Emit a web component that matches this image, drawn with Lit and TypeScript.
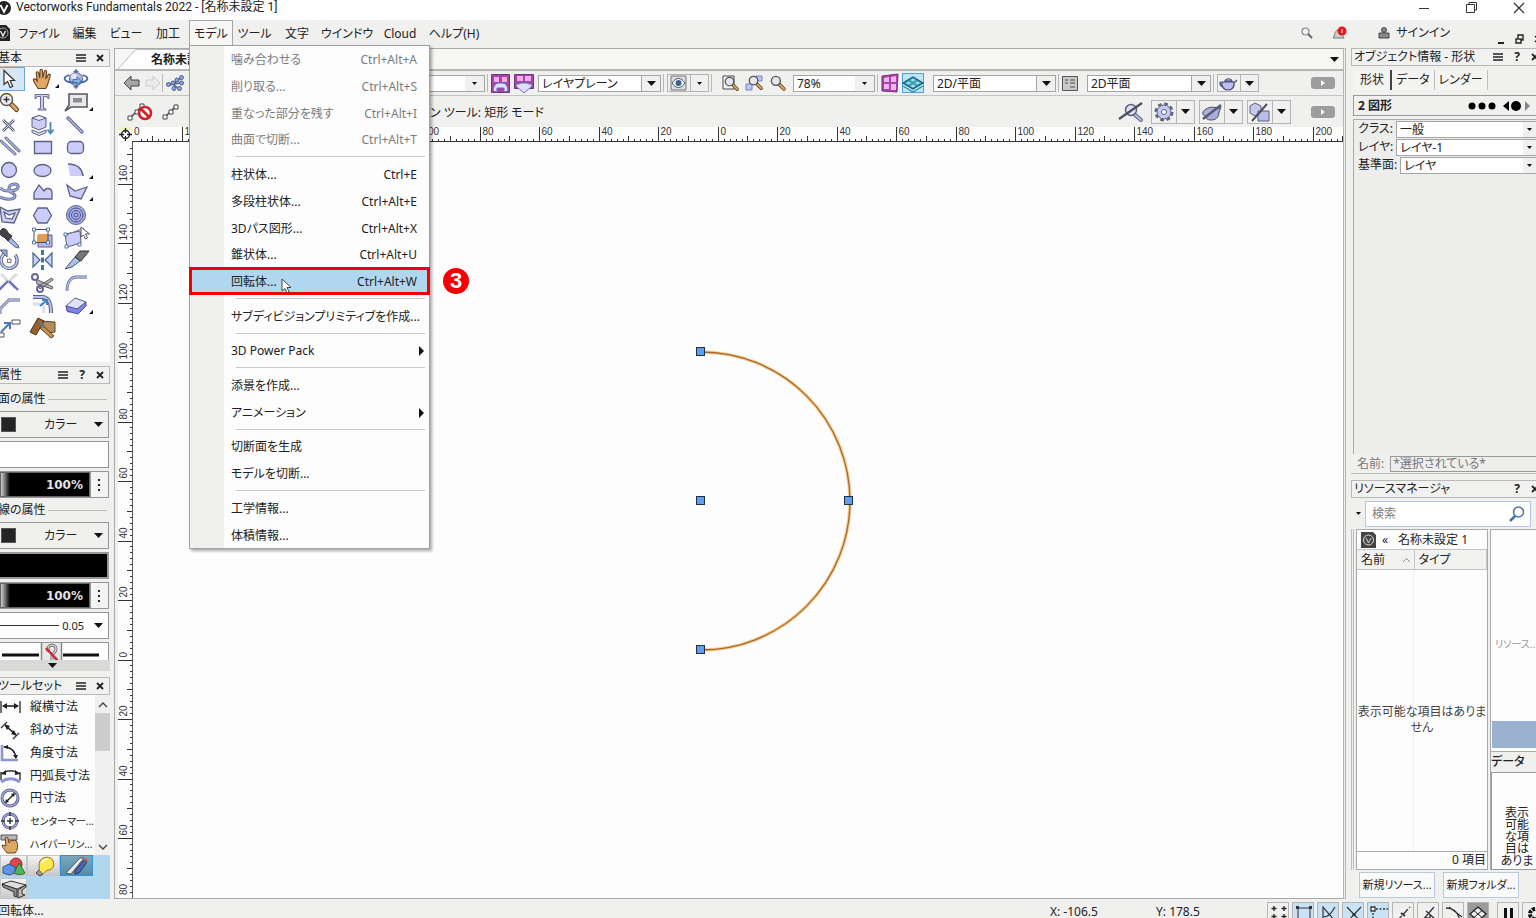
import { LitElement, html, css, svg, nothing } from "lit";
import type { TemplateResult } from "lit";
import { customElement } from "lit/decorators.js";
import { classMap } from "lit/directives/class-map.js";

const OUT = "#59637c";
const LAV = "#ccccfb";
const BLUE = "#6573b4";

/* Draws an icon of w x h units at its natural size. */
const icon = (w: number, h: number, body: unknown) =>
  html`<svg class="icon" width=${w} height=${h} viewBox="0 0 ${w} ${h}" aria-hidden="true">${body}</svg>`;

const caret = icon(9, 5, svg`<path d="M0 0h9L4.5 5z" fill="#111"/>`);
const smallCaret = icon(5, 3, svg`<path d="M0 0h5L2.5 3z" fill="#111"/>`);
const menuGlyph = icon(10, 8, svg`<path d="M0 1h10M0 4h10M0 7h10" stroke="#222" stroke-width="1.5"/>`);
const closeGlyph = icon(8, 8, svg`<path d="M1 1l6 6M7 1l-6 6" stroke="#222" stroke-width="1.8"/>`);

const lens = svg`<path d="M10.500 10.500l5 5" stroke="#5c4426" stroke-width="4" stroke-linecap="round"/><path d="M11 11l4.500 4.500" stroke="#dba663" stroke-width="2.200" stroke-linecap="round"/><circle cx="6.500" cy="6.500" r="5" fill="#e4e6ec" stroke="#555" stroke-width="1.500"/>`;

/* Tool glyphs share a 26 x 22 box. */
const glyphs: Record<string, unknown> = {
  arrow: svg`<path d="M9 2.500v14l3.600-3 2.600 6 2.500-1-2.600-6h4.400z" fill="#fff" stroke="#333" stroke-width="1.200"/>`,
  hand: svg`<path d="M9 20.500C7 16.500 4.500 14 4.300 11.800c.5-1.800 2.400-1 4 1L7.200 5.200c0-2 2-2 2.500 0l1.100 5L11 2.800c.2-2 2.400-2 2.500 0l.3 7.100 1.500-6.300c.6-1.900 2.600-1.300 2.300.5l-.9 7 2.400-4.200c1-1.500 2.700-.6 2.100 1-1.600 4.600-2 9.600-4.600 12.600z" fill="#e3a765" stroke="#5d4325" stroke-width="1.100"/>`,
  flyover: svg`<circle cx="13" cy="11" r="6.500" fill="#b4b5f3" stroke="${OUT}"/><circle cx="11" cy="8.500" r="3" fill="#e6e6ff"/><path d="M6.500 7C-1 9 .5 13 8 14.500l10 0C25.500 13 27 9 19.500 7" fill="none" stroke="#40669f" stroke-width="1.800"/><path d="M10 11.500h4v-2.500l4.500 4-4.500 4v-2.500h-4z" fill="#86b4e2" stroke="#315f98" stroke-width=".8"/><path d="M13 1l-3 3h6zM13 21l-3-3h6z" fill="#58739f"/>`,
  zoom: svg`<g transform="translate(4 1)"><path d="M12 12l5.500 5.500" stroke="#5c4426" stroke-width="5" stroke-linecap="round"/><path d="M12.500 12.500l5 5" stroke="#dba663" stroke-width="3" stroke-linecap="round"/><circle cx="7.500" cy="7.500" r="6" fill="#eceef3" stroke="#555" stroke-width="1.400"/><path d="M7.500 4.500v6M4.500 7.500h6" stroke="#333" stroke-width="1.400"/></g>`,
  text: svg`<path d="M6 3.500h14v4h-1.200l-.8-2h-3.500v12l2.500.5v1H9v-1l2.500-.5v-12H8l-.8 2H6z" fill="${LAV}" stroke="${OUT}" stroke-width=".9"/>`,
  callout: svg`<path d="M6 3h18v13H8l-6 4 4-6z" fill="#e9e9ec" stroke="#55585f" stroke-width="1.600"/><path d="M10 7h9v4.500h-9z" fill="#8c8d92"/>`,
  locus: svg`<path d="M8 6l11 11M19 6L8 17" stroke="${OUT}" stroke-width="2.800"/><path d="M8 6l11 11M19 6L8 17" stroke="#e0e2f0" stroke-width="1"/>`,
  extrude: svg`<path d="M3 4l7-2.500L17 4v9l-7 3-7-3z" fill="${LAV}" stroke="${OUT}"/><path d="M3 4l7 2.500L17 4l-7-2.500z" fill="#ececff" stroke="${OUT}"/><path d="M3 16l7 3 7-3v2.500l-7 3-7-3z" fill="#e5e5fb" stroke="${OUT}"/><path d="M21.500 8v11m-3-3.500l3 4 3-4" fill="none" stroke="#5084bd" stroke-width="1.800"/>`,
  line: svg`<path d="M5 4l14 14" stroke="${OUT}" stroke-width="3.200" stroke-linecap="round"/><path d="M5 4l14 14" stroke="#b1b8f6" stroke-width="1.500" stroke-linecap="round"/>`,
  dline: svg`<path d="M6 5l14 13M11 2l13 13" stroke="${OUT}" stroke-width="3" stroke-linecap="round"/><path d="M6 5l14 13M11 2l13 13" stroke="#aeb6f6" stroke-width="1.400" stroke-linecap="round"/>`,
  rect: svg`<path d="M5.500 5.500h17v12h-17z" fill="${LAV}" stroke="${OUT}" stroke-width="1.300"/>`,
  rrect: svg`<rect x="4.500" y="5.500" width="16" height="12" rx="4" fill="${LAV}" stroke="${OUT}" stroke-width="1.300"/>`,
  circle: svg`<circle cx="14" cy="11" r="7.500" fill="${LAV}" stroke="${OUT}" stroke-width="1.300"/>`,
  oval: svg`<ellipse cx="13.500" cy="11.500" rx="8.500" ry="6" fill="${LAV}" stroke="${OUT}" stroke-width="1.300"/>`,
  arc: svg`<path d="M5 5C13 5 19 9 20 17H7z" fill="${LAV}"/><path d="M5 5C13 5 19 9 20 17" fill="none" stroke="${OUT}" stroke-width="1.600"/>`,
  freehand: svg`<path d="M5 7c2 2 5 3 9 3 6 0 10-2 9-5-1-3-9-3-9 3 0 4 6 4 6 7 0 4-9 4-15 1" fill="none" stroke="${OUT}" stroke-width="3"/><path d="M5 7c2 2 5 3 9 3 6 0 10-2 9-5-1-3-9-3-9 3 0 4 6 4 6 7 0 4-9 4-15 1" fill="none" stroke="#aab3f3" stroke-width="1.300"/>`,
  poly: svg`<path d="M5 18v-6l5-8 5 6c1-3 7-4 8 1v7z" fill="${LAV}" stroke="${OUT}" stroke-width="1.300"/>`,
  polygon: svg`<path d="M4 4l8 6 12-4-6 12-11-3z" fill="${LAV}" stroke="${OUT}" stroke-width="1.300"/>`,
  dpoly: svg`<path d="M5 3l8 4 12-2-6 14-12-1z" fill="${LAV}" stroke="${OUT}" stroke-width="1.300"/><path d="M9 8l5 3 6-2-3 6-6-1z" fill="#fff" stroke="${OUT}" stroke-width="1.200"/>`,
  hexagon: svg`<path d="M9 4h9l4.500 7.500L18 19H9l-4.500-7.500z" fill="${LAV}" stroke="${OUT}" stroke-width="1.300"/>`,
  spiral: svg`<circle cx="13" cy="11" r="9.500" fill="#a9aeee" stroke="${OUT}"/><circle cx="13" cy="11" r="7" fill="none" stroke="#46507f"/><circle cx="13" cy="11" r="4.500" fill="none" stroke="#46507f"/><circle cx="13" cy="11" r="2" fill="none" stroke="#46507f"/>`,
  dropper: svg`<path d="M15 10l8 8 1 3-4-1-8-7z" fill="#a7b4f2" stroke="${OUT}"/><path d="M6 3c2-3 6-1 7 3l4 3-4 5-4-4C5 9 4 6 6 3z" fill="#43434a" stroke="#2c2c30"/>`,
  clip: svg`<path d="M9 8h14v12H9z" fill="#b3b5ee" stroke="${OUT}"/><path d="M9 7h10v8H9z" fill="#e09c52"/><path d="M5 2.500h14v13H5z" fill="none" stroke="#454b59"/><path d="M3.500 1h3v3h-3zM17.500 1h3v3h-3zM3.500 14h3v3h-3zM17.500 14h3v3h-3z" fill="#fff" stroke="#416b9b" stroke-width=".9"/>`,
  reshape: svg`<path d="M2 7l15-3 1 12-14 4z" fill="${LAV}" stroke="${OUT}"/><path d="M3 8L21 1" stroke="#777"/><path d="M1 6h3v3H1zM2 18h3v3H2zM15 16h3v3h-3z" fill="#fff" stroke="#416b9b" stroke-width=".9"/><path d="M18 0v10l2.500-2 2 4 2-1-2-4h4z" fill="#fff" stroke="#555"/>`,
  rotate: svg`<path d="M11 4a8 8 0 1 0 9 2" fill="none" stroke="${OUT}" stroke-width="3.400"/><path d="M11 4a8 8 0 1 0 9 2" fill="none" stroke="#c3cdf7" stroke-width="1.600"/><path d="M5 1h7v7z" fill="#92a6db" stroke="${OUT}"/><path d="M12.500 10h3.500v3.500h-3.500z" fill="none" stroke="#777"/>`,
  mirror: svg`<path d="M4 4l7 7-7 7zM23 4l-7 7 7 7z" fill="${LAV}" stroke="#47668d" stroke-width="1.200"/><path d="M13.500 1v20" stroke="#4475a3" stroke-width="3" stroke-dasharray="5 2.500"/>`,
  knife: svg`<path d="M2 20L12 8l5 4-8 6z" fill="#abc1e9" stroke="#46566f"/><path d="M12 8l5-6h9l-8 10z" fill="#75777c" stroke="#333"/>`,
  trim: svg`<path d="M6 2l14 14M22 2l-7 6" stroke="#ddd" stroke-width="3"/><path d="M14 9l9 9M13 9l-9 9" stroke="${BLUE}" stroke-width="2.400"/>`,
  scissors: svg`<path d="M7 7l17 8-1 2L8 12zM9 14l14-8 1 2-13 9z" fill="#b3b3b7" stroke="#555" stroke-width=".9"/><circle cx="6" cy="5" r="3" fill="none" stroke="#6a659c" stroke-width="2"/><circle cx="11" cy="17" r="3" fill="none" stroke="#6a659c" stroke-width="2"/>`,
  fillet: svg`<path d="M4 19c0-9 4-14 10-14h10" fill="none" stroke="${OUT}" stroke-width="2.800"/><path d="M4 19c0-9 4-14 10-14h10" fill="none" stroke="#b7c3f6" stroke-width="1.400"/>`,
  chamfer: svg`<path d="M5 20v-5l9-9h11" fill="none" stroke="${OUT}" stroke-width="2.800"/><path d="M5 20v-5l9-9h11" fill="none" stroke="#b7c3f6" stroke-width="1.400"/>`,
  offset: svg`<path d="M4 3h9c6 0 9 4 9 16" fill="none" stroke="${OUT}" stroke-width="4"/><path d="M4 3h9c6 0 9 4 9 16" fill="none" stroke="#b7c3f6" stroke-width="2"/><path d="M4 10h6c4 0 5 2 5 9" fill="none" stroke="#dcdcf2" stroke-width="3"/><path d="M11 12l6-5m-4-1h5v5" fill="none" stroke="#3e83b9" stroke-width="2"/>`,
  eraser: svg`<path d="M3 12L12 4l11 4-8 9-10 1z" fill="#dfe0fb" stroke="${OUT}"/><path d="M3 12l11 3 9-7v4l-8 8-11-3z" fill="#7f84e6" stroke="#4a4f95"/>`,
  connect: svg`<path d="M17 3h8v4h-8zM3 16h6v4H3z" fill="#fff" stroke="#555"/><path d="M6 15l8-8m-5-1h6v6" fill="none" stroke="#4e76b0" stroke-width="2"/>`,
  roller: svg`<path d="M12 4l14 1v10l-7 1z" fill="#b38e5c" stroke="#5b4429"/><path d="M1 15L9 1l6 3-8 14z" fill="#965f2c" stroke="#4b3219"/><path d="M11 11l11 10 3-2-11-10z" fill="#d0914b" stroke="#5b4429"/><path d="M11 5l4 6" stroke="#5a7ea7" stroke-width="2"/>`,
};

interface Tool { id: string; label: string; flyout?: boolean; }
const tools: Tool[] = [
  { id: "arrow", label: "セレクション" }, { id: "hand", label: "パン", flyout: true }, { id: "flyover", label: "フライオーバー" },
  { id: "zoom", label: "拡大表示" }, { id: "text", label: "文字" }, { id: "callout", label: "引出線", flyout: true },
  { id: "locus", label: "基準点" }, { id: "extrude", label: "プッシュ/プル" }, { id: "line", label: "直線" },
  { id: "dline", label: "ダブルライン" }, { id: "rect", label: "四角形" }, { id: "rrect", label: "隅の丸い四角形" },
  { id: "circle", label: "円" }, { id: "oval", label: "長円" }, { id: "arc", label: "円弧", flyout: true },
  { id: "freehand", label: "フリーハンド" }, { id: "poly", label: "曲線" }, { id: "polygon", label: "多角形", flyout: true },
  { id: "dpoly", label: "ダブルライン多角形" }, { id: "hexagon", label: "正多角形" }, { id: "spiral", label: "渦巻き" },
  { id: "dropper", label: "アイドロッパ" }, { id: "clip", label: "属性マッピング" }, { id: "reshape", label: "変形" },
  { id: "rotate", label: "回転" }, { id: "mirror", label: "ミラー反転" }, { id: "knife", label: "切断" },
  { id: "trim", label: "トリミング" }, { id: "scissors", label: "はさみ" }, { id: "fillet", label: "フィレット" },
  { id: "chamfer", label: "面取り" }, { id: "offset", label: "オフセット" }, { id: "eraser", label: "消しゴム", flyout: true },
  { id: "connect", label: "結合" }, { id: "roller", label: "属性" },
];

/* Menu bar entries and the column width each one takes. */
const menus: [string, number][] = [
  ["ファイル", 50], ["編集", 41], ["ビュー", 42], ["加工", 42], ["モデル", 44], ["ツール", 43],
  ["文字", 42], ["ウインドウ", 58], ["Cloud", 48], ["ヘルプ(H)", 60],
];

interface Entry { label: string; keys?: string; off?: boolean; sub?: boolean; hot?: boolean; }
const modelMenu: (Entry | null)[] = [
  { label: "噛み合わせる", keys: "Ctrl+Alt+A", off: true },
  { label: "削り取る...", keys: "Ctrl+Alt+S", off: true },
  { label: "重なった部分を残す", keys: "Ctrl+Alt+I", off: true },
  { label: "曲面で切断...", keys: "Ctrl+Alt+T", off: true },
  null,
  { label: "柱状体...", keys: "Ctrl+E" },
  { label: "多段柱状体...", keys: "Ctrl+Alt+E" },
  { label: "3Dパス図形...", keys: "Ctrl+Alt+X" },
  { label: "錐状体...", keys: "Ctrl+Alt+U" },
  { label: "回転体...", keys: "Ctrl+Alt+W", hot: true },
  null,
  { label: "サブディビジョンプリミティブを作成..." },
  null,
  { label: "3D Power Pack", sub: true },
  null,
  { label: "添景を作成..." },
  { label: "アニメーション", sub: true },
  null,
  { label: "切断面を生成" },
  { label: "モデルを切断..." },
  null,
  { label: "工学情報..." },
  { label: "体積情報..." },
];

const toolset: [string, unknown, boolean?][] = [
  ["縦横寸法", svg`<path d="M1 3v12M20 3v12" stroke="#333" stroke-width="1.400"/><path d="M3 8h15" stroke="#222" stroke-width="1.600"/><path d="M2 8l5-3v6zM19 8l-5-3v6z" fill="#222"/>`],
  ["斜め寸法", svg`<path d="M1 7l6-6M13 18l6-6" stroke="#333" stroke-width="1.300"/><path d="M6 5l9 8" stroke="#222" stroke-width="1.600"/><path d="M4 3l6 2-3 4zM17 15l-6-2 3-4z" fill="#222"/>`],
  ["角度寸法", svg`<path d="M2 1v15h16" fill="none" stroke="#8f94d2" stroke-width="2.600"/><path d="M4 3c7 0 11 4 12 11" fill="none" stroke="#222" stroke-width="1.500"/><path d="M3 3l5-2v4zM16 15l-3-4h5z" fill="#222"/>`],
  ["円弧長寸法", svg`<path d="M1 15c6-4 13-4 19 0" fill="none" stroke="#8f94d2" stroke-width="3"/><path d="M1 13V5M20 13V5M1 7c6-4 13-4 19 0" fill="none" stroke="#333" stroke-width="1.400"/><path d="M1 7l5-4v5zM20 7l-5-4v5z" fill="#222"/>`],
  ["円寸法", svg`<circle cx="10" cy="9" r="8" fill="#fff" stroke="#555b80" stroke-width="3"/><circle cx="10" cy="9" r="8" fill="none" stroke="#a3a8df" stroke-width="1.400"/><path d="M6 13l8-8" stroke="#222" stroke-width="1.400"/><path d="M5 14l1-4 3 3zM15 4l-1 4-3-3z" fill="#222"/>`],
  ["センターマー...", svg`<circle cx="10" cy="9" r="7" fill="#fff" stroke="#555b80" stroke-width="3"/><circle cx="10" cy="9" r="7" fill="none" stroke="#a3a8df" stroke-width="1.400"/><path d="M10 0v4M10 14v4M1 9h4M15 9h4M10 6v6M7 9h6" stroke="#333" stroke-width="1.500"/>`, true],
  ["ハイパーリン...", svg`<path d="M1 0h16v5H1z" fill="#b9b9bd" stroke="#555"/><path d="M7 18c-3-4-5-6-5-8l4 1-1-8c1-1 2-1 3 0l1 5 2-3 2 1 2-1 2 2c1 3 1 8-2 11z" fill="#e3a765" stroke="#5d4325"/>`, true],
];

const snaps: [string, string, unknown][] = [
  ["グリッドスナップ", "", svg`<path d="M6 3v5M3.500 5.500h5M16 3v5M13.500 5.500h5M6 11v5M3.500 13.500h5M16 11v5M13.500 13.500h5" stroke="#222" stroke-width="1.300"/>`],
  ["図形スナップ", "on", svg`<path d="M5 5h12v13H5z" fill="none" stroke="#333"/><path d="M3 3h3v3H3zM16 3h3v3h-3z" fill="#333"/>`],
  ["角度スナップ", "on", svg`<path d="M5 19V4l12 14M5 14c6 0 9-5 12-10" fill="none" stroke="#333" stroke-width="1.200"/>`],
  ["交点スナップ", "on", svg`<path d="M4 4l14 15M18 4L4 19" stroke="#333" stroke-width="1.200"/><path d="M9.500 10h3v3h-3z" fill="#333"/>`],
  ["スマートポイント", "on", svg`<path d="M3 4h4v4H3z" fill="#fff" stroke="#333" stroke-width="1.300"/><path d="M8 6h12M5 10v9" stroke="#333" stroke-width="1.300" stroke-dasharray="2 1.500"/>`],
  ["距離スナップ", "", svg`<path d="M4 18L17 4" stroke="#333" stroke-width="1.300" stroke-dasharray="7 2"/><path d="M8 10l4 3" stroke="#333" stroke-width="2"/>`],
  ["スマートエッジ", "", svg`<path d="M4 18L16 4M8 8l9 8M6 15h6v-4" fill="none" stroke="#333" stroke-width="1.300"/>`],
  ["接線スナップ", "", svg`<path d="M3 5c9 0 13 6 14 14M6 4l13 10" fill="none" stroke="#333" stroke-width="1.300"/>`],
  ["作業平面", "dark", svg`<path d="M10 4l8 7-8 7-8-7z" fill="#eee" stroke="#222" stroke-width="1.300"/><path d="M6 7.500l8 7M14 7.500l-8 7" stroke="#222"/>`],
];

const STEP = 59.5;
const ORIGIN_X = 599.7;

@customElement("app-root")
export class AppRoot extends LitElement {
  static styles = css`
    :host {
      display: grid;
      grid-template-rows: 20px 26px minmax(0, 1fr) 17px;
      height: 100vh;
      overflow: hidden;
      background: #f0f0ef;
      color: #222;
      font: 12px/16px "Noto Sans", "Noto Sans CJK JP", sans-serif;
      font-feature-settings: "palt";
      white-space: nowrap;
    }
    * { box-sizing: border-box; }
    button, select, input { font: inherit; font-feature-settings: inherit; color: inherit; margin: 0; padding: 0; border: 0; border-radius: 0; background: none; }
    button { display: flex; align-items: center; justify-content: center; }
    ul { list-style: none; margin: 0; padding: 0; }
    .icon { display: block; flex: none; overflow: visible; }

    .title { display: flex; align-items: center; background: #fefefe; padding: 0 12px 5px 0; }
    .title .icon { margin-left: -4px; }
    .title h1 { margin: 0 0 0 4px; font: 400 12px/15px "Roboto", "Noto Sans CJK JP", sans-serif; flex: 1; }
    .winbtns { display: flex; gap: 37px; }
    .winbtns .icon { margin: 0; }

    .menubar { display: flex; align-items: stretch; }
    .logo { align-self: center; width: 14px; overflow: hidden; }
    .logo .icon { margin-left: -4px; }
    .menus { display: flex; }
    .menus > li { position: relative; display: flex; }
    .menus > li > button { width: 100%; padding-top: 1px; }
    .open { background: #f7f7f6; border: 1px solid #a5a5a5; border-bottom: 0; }
    .account { display: flex; align-items: center; margin-left: auto; }
    .account button { gap: 7px; }
    .search { margin-right: 20px; }
    .bell { margin-right: 31px; }
    .signin { margin-right: 48px; }
    .mdi { display: flex; align-items: flex-end; gap: 10px; padding-bottom: 2px; margin-right: -6px; }

    .drop {
      position: absolute; z-index: 5; left: 0; top: 25px; width: 241px; height: 504px;
      display: flex; flex-direction: column;
      background: linear-gradient(90deg, #f0f0ef 34px, #fdfdfd 34px);
      border: 1px solid #a0a0a0; box-shadow: 2px 2px 3px #0005;
    }
    .drop li { flex: 1; display: flex; min-height: 0; }
    .drop .sep { flex: 0 0 8px; align-items: center; padding: 0 4px 0 46px; }
    .sep hr { width: 100%; margin: 0; border: 0; border-top: 1px solid #c9c9c9; }
    .drop button { width: 100%; justify-content: flex-start; padding: 2px 12px 0 41px; }
    .drop button:disabled { color: #7c7c7c; }
    .drop kbd { font: inherit; margin-left: auto; }
    .drop .sub { margin-left: auto; margin-right: -7px; }
    .drop .hot { background: #b0d6f0; outline: 3px solid #f00000; outline-offset: -2px; }
    .drop .hot button { position: relative; }
    .pointer { position: absolute; left: 91px; top: 10px; }
    .badge {
      position: absolute; z-index: 6; left: 254px; top: 248px; width: 26px; height: 26px; border-radius: 50%;
      background: #f50000; color: #fff; display: grid; place-items: center; font: bold 22px/26px "Liberation Sans", Arial, sans-serif;
    }

    main { display: grid; grid-template-columns: 111px minmax(0, 1fr) 185px; min-height: 0; }

    .left { display: flex; flex-direction: column; min-height: 0; overflow: hidden; padding: 3px 0 2px; }
    .head {
      display: flex; align-items: center; gap: 10px; flex: none; height: 18px; padding-right: 5px;
      border: 1px solid #b9b9b9; border-left: 0; background: #f1f1f0; margin-right: 1px;
    }
    .head h2 { margin: 0 auto 0 -2px; font-size: 12px; font-weight: 400; }
    .head b { font-size: 12px; width: 8px; text-align: center; }
    .toolbox { flex: 1; background: #fdfdfd; margin: 0 1px 4px 0; }
    .tools { display: grid; grid-template-columns: repeat(3, 34px); grid-template-rows: repeat(12, 1fr); height: 272px; margin-left: -9px; }
    .picked { background: #d5e7f5; border: 1px solid #68a7de; }

    .group { flex: none; display: flex; align-items: center; height: 24px; padding-right: 2px; }
    .group span { margin-left: -2px; }
    .group hr { flex: 1; border: 0; border-top: 1px solid #bdbdbd; margin: 0 0 0 2px; }
    .attrs { flex: none; display: flex; flex-direction: column; padding: 3px 2px 0 0; }
    .box { height: 27px; border: 1px solid #969696; border-left: 0; background: #fefefe; margin-bottom: 3px; }
    .color { height: 27px; margin-bottom: 3px; border: 1px solid #969696; border-left: 0; display: grid; grid-template-columns: 1fr auto; align-items: center; }
    .color > * { grid-row: 1; }
    .color .icon { pointer-events: none; }
    .swatch { grid-column: 1; width: 15px; height: 15px; background: #242424; border: 1px solid #555; margin-left: 1px; }
    .color select { grid-column: 1 / 3; appearance: none; width: 100%; height: 25px; padding-left: 44px; }
    .color > .icon { grid-column: 2; margin-right: 5px; }
    .black { background: #000; border: 2px solid #999; border-left: 0; }
    .opacity { display: flex; align-items: stretch; height: 27px; margin-bottom: 3px; border: 1px solid #969696; border-left: 0; }
    .opacity output {
      flex: 1; border: 1px solid #666; background: linear-gradient(90deg, #ccc, #777 4px, #000 9px);
      color: #e4e4e4; font: bold 12px/24px "DejaVu Sans", sans-serif; text-align: right; padding-right: 6px;
    }
    .opacity button { width: 18px; background: #f4f4f4; border-left: 1px solid #999; }
    .last-field { margin-bottom: 0; }
    .weight { display: flex; align-items: center; background: #fefefe; padding-right: 5px; font-size: 11px; gap: 3px; }
    .weight hr { flex: 1; border: 0; border-top: 1px solid #333; margin: 0; }
    .weight .icon { margin-left: 7px; }
    .ends { height: 18px; margin: 0; display: flex; border-bottom: 0; overflow: hidden; }
    .more { height: 11px; background: #d9d9d8; margin: 0 -1px 6px 0; padding-right: 6px; flex: none; }

    .list { flex: 0 0 160px; display: flex; min-height: 0; margin-right: 1px; }
    .list ul { flex: 1; min-width: 0; display: flex; flex-direction: column; background: #fdfdfd; }
    .list li { flex: 1; min-height: 0; display: flex; padding-top: 1px; }
    .list li button { gap: 11px; justify-content: flex-start; }
    .list .small { font-size: 10px; }
    .scroll { flex: none; width: 15px; background: #f0f0f0; display: flex; flex-direction: column; align-items: center; padding: 7px 0 5px; gap: 6px; }
    .thumb { width: 15px; height: 38px; background: #cdcdcd; margin-bottom: auto; }
    .sets { flex: none; display: grid; grid-template-columns: 27px 33px 33px; grid-template-rows: 21px 21px; gap: 2px 0; height: 44px; background: #b0d6f0; margin-right: 1px; }
    .sets button { background: linear-gradient(#f4f4f4, #c9c9c9); border: 1px solid #c5c5c5; }
    .sets .cur { background: linear-gradient(#7ba8b8, #4f8ea8); border-color: #3c8dcb; }

    .doc { display: flex; flex-direction: column; min-width: 0; margin: 2px 5px 2px 3px; border: 1px solid #a9a9a9; border-right: 3px double #b5b5b5; padding: 0; }
    .tabs { flex: none; height: 22px; display: flex; align-items: center; border-bottom: 2px solid #b5b5b1; background: #f6f6f4; }
    .tab { display: flex; align-items: center; height: 20px; font-weight: 700; }
    .tab span { background: #fefefe; line-height: 20px; padding: 0 12px 0 13px; border-top: 1px solid #bbb; height: 20px; }
    .tabs > .icon { margin: 0 4px 0 auto; }
    .bar { flex: none; display: flex; align-items: center; height: 25px; padding: 0 8px 0 9px; border-bottom: 1px solid #c4c4c4; }
    .bar.modes { height: 31px; border-bottom: 0; }
    .rule { flex: none; width: 2px; height: 18px; border-left: 1px solid #b8b8b8; margin: 0 2px; }
    .s4 { flex: none; width: 4px; }
    .s7 { flex: none; width: 7px; }
    .s9 { flex: none; width: 9px; }
    .s16 { flex: none; width: 16px; }
    .hidden-fields { flex: none; width: 221px; }
    .pick { flex: none; display: grid; height: 17px; border: 1px solid #a5a5a5; align-items: center; background: #fefefe; }
    .pick select { grid-area: 1 / 1; appearance: none; width: 100%; height: 15px; padding-left: 3px; line-height: 15px; }
    .pick i { grid-area: 1 / 1; justify-self: end; display: grid; place-items: center; width: 19px; height: 15px; background: #f0f0ef; pointer-events: none; }
    .pick .line { border-left: 1px solid #a5a5a5; }
    .split { flex: none; display: flex; border: 1px solid #b4b4b4; height: 18px; }
    .split button:first-child { width: 22px; }
    .split button + button { width: 18px; border-left: 1px solid #b4b4b4; }
    .modes .split { height: 24px; margin-right: 4px; }
    .modes .split button:first-child { width: 24px; }
    .pill { width: 24px; height: 12px; border-radius: 3px; background: #9d9d9d; }
    .on-blue { background: #bfe4f5; border: 1px solid #4ba3d6; }
    .hint { width: 364px; text-align: right; padding-top: 2px; }
    .grow { flex: 1; }

    .sheet { flex: 1; display: grid; grid-template: 15px minmax(0, 1fr) / 14px minmax(0, 1fr); margin-left: 3px; background: #fdfdfd; min-height: 0; }
    .sheet svg { display: block; width: 100%; height: 100%; overflow: hidden; }
    .top { grid-area: 1 / 1 / 2 / 3; }
    .side { grid-area: 2 / 1; min-height: 0; overflow: hidden; }
    .canvas { grid-area: 2 / 2; min-height: 0; overflow: hidden; border-left: 1px solid #555; }
    .tick { font: 10px "Liberation Sans", Arial, sans-serif; fill: #333; }

    .right { display: flex; flex-direction: column; min-height: 0; overflow: hidden; padding: 2px 0; }
    .right .head { margin-right: -9px; border-left: 1px solid #b9b9b9; padding-left: 2px; }
    .right .head h2 { margin-left: 0; }
    .views { flex: none; display: flex; align-items: center; height: 27px; padding: 3px 0 2px 3px; }
    .views button { height: 20px; padding: 0 4px; border-right: 1px solid #bdbdbd; background: #f4f4f3; }
    .views .cur { border-right: 2px solid #444; padding: 0 6px; }
    .info { flex: none; display: flex; align-items: center; height: 21px; margin: 2px -4px 3px 2px; border: 1px solid #999; padding: 0 8px 0 4px; font-weight: 700; }
    .info .icon { margin-left: auto; }
    .form { flex: none; height: 335px; margin: 0 -4px 0 2px; border: 1px solid #aaa; border-bottom: 0; padding-right: 3px; background: #ededec; }
    .row { display: flex; align-items: center; gap: 3px; height: 18px; padding-left: 4px; }
    .row .pick { flex: 1; border-right: 0; }
    .row .pick i { width: 13px; }
    .name { flex: none; display: flex; align-items: center; gap: 6px; height: 20px; margin-bottom: 6px; padding-left: 6px; border-bottom: 1px solid #bbb; color: #777; }
    .name input { flex: 1; min-width: 0; height: 16px; border: 1px solid #999; border-right: 0; background: #eeeeed; padding-left: 2px; margin-right: -4px; }
    .find { flex: none; display: flex; align-items: center; height: 31px; padding-left: 5px; gap: 4px; }
    .field { display: flex; align-items: center; width: 166px; height: 26px; border: 1px solid #b4c8e4; background: #fefefe; padding: 0 5px 0 6px; }
    .field input { flex: 1; min-width: 0; outline: 0; }
    .field input::placeholder { color: #808080; opacity: 1; }
    .assets { flex: 1; display: grid; grid-template-columns: 132px 1fr; gap: 2px; min-height: 0; padding-left: 2px; border-left: 3px double #bbb; }
    .pane { display: flex; flex-direction: column; border: 1px solid #aaa; min-height: 0; background: #fdfdfd; }
    .crumb { flex: none; display: flex; align-items: center; gap: 6px; height: 19px; padding-left: 4px; }
    .crumb span { margin-left: 4px; }
    .pane table { flex: none; border-collapse: collapse; width: 100%; background: #f2f2f1; }
    .pane th { font-weight: 400; text-align: left; height: 20px; padding: 0 4px; border: 1px solid #c4c4c4; border-left: 0; }
    .pane th:first-child { width: 57px; }
    .th { display: flex; align-items: center; justify-content: space-between; }
    .empty { flex: 1; display: grid; align-content: center; text-align: center; white-space: normal; color: #444; margin: 0; padding-top: 18px; background: linear-gradient(90deg, #0000 56px, #eef 56px, #eef 57px, #0000 57px); }
    .count { flex: none; height: 18px; text-align: right; border-top: 1px solid #aaa; padding-right: 1px; line-height: 15px; }
    .preview { display: grid; grid-template-rows: 1fr 32px 21px 98px; min-height: 0; margin-right: -4px; border-left: 1px solid #aaa; border-top: 1px solid #aaa; }
    .preview p { margin: 0; }
    .preview .res { background: #fdfdfd; color: #999; font-size: 10px; display: grid; align-items: center; padding: 38px 0 0 4px; }
    .strip { background: #9ab2d0; border: solid #fdfdfd; border-width: 2px 0 3px 1px; }
    .preview h3 { margin: 0; font-size: 12px; line-height: 19px; font-weight: 500; border-top: 1px solid #aaa; }
    .preview .note { background: #fdfdfd; border: 1px solid #999; border-right: 0; line-height: 12px; text-align: center; padding: 34px 0 0 2px; overflow: hidden; }
    .foot { flex: none; display: flex; gap: 8px; height: 29px; padding: 2px 0 0 8px; }
    .foot button { width: 76px; height: 26px; border: 1px solid #b8c8de; background: #fafafa; font-size: 11px; }

    .status { display: flex; align-items: flex-start; border-top: 0; }
    .status span { margin: 2px auto 0 -2px; }
    .status output { width: 106px; margin-top: 3px; }
    .snaps { display: flex; gap: 3px; width: 269px; margin-left: 5px; padding-top: 1px; }
    .snaps button { flex: none; width: 22px; height: 22px; border: 1px solid #b5b5b5; }
    .snaps .on { background: #c9e3f6; }
    .snaps .dark { background: #9b9b9b; }
    .snaps .gap { margin-left: 5px; }
  `;

  private head(title: string, help: boolean, menu = true): TemplateResult {
    return html`<header class="head"><h2>${title}</h2>
      ${menu ? menuGlyph : nothing}${help ? html`<b>?</b>` : nothing}${closeGlyph}</header>`;
  }

  private pick(value: string, label: string, width: number | null, big = true, line = true) {
    return html`<div class="pick" style=${width ? `width:${width}px` : ""}>
      <select aria-label=${label}><option>${value}</option></select>
      <i class=${classMap({ line })}>${big ? caret : smallCaret}</i></div>`;
  }

  private tool(t: Tool) {
    return html`<button class=${classMap({ picked: t.id === "arrow" })} title=${t.label}>
      <svg class="icon" width="26" height="22" viewBox="0 0 26 22" aria-hidden="true">${glyphs[t.id]}
      ${t.flyout ? svg`<path d="M30 16v4h-4z" fill="#111"/>` : nothing}</svg></button>`;
  }

  private entry(e: Entry | null) {
    if (!e) return html`<li class="sep"><hr /></li>`;
    return html`<li class=${classMap({ hot: !!e.hot })}><button ?disabled=${e.off}>${e.label}
      ${e.keys ? html`<kbd>${e.keys}</kbd>` : nothing}
      ${e.sub ? html`<span class="sub">${icon(5, 10, svg`<path d="M0 0l5 5-5 5z" fill="#111"/>`)}</span>` : nothing}
      ${e.hot ? html`<span class="pointer">${icon(10, 16, svg`<path d="M1 1v12l3-2.500 2 4.500 2-1-2-4.500h4z" fill="#fff" stroke="#444"/>`)}</span>` : nothing}
      </button></li>`;
  }

  private topRuler() {
    const out = [];
    for (let k = -97; k <= 124; k++) {
      const x = Math.round(ORIGIN_X + (k * STEP) / 10) + 0.5;
      if (x < 15) continue;
      const h = k % 10 === 0 ? 14 : k % 5 === 0 ? 5 : 2;
      out.push(svg`<path d="M${x} ${14 - h}v${h}" stroke="#333"/>`);
      if (k % 10 === 0) out.push(svg`<text class="tick" x=${x + 2} y="8">${Math.abs(k * 2)}</text>`);
    }
    return html`<svg class="top" aria-hidden="true">${out}
      <path d="M14 14.500h1300" stroke="#333"/><path d="M0 0h14v3H0z" fill="#f3f3b4"/>
      <circle cx="7.500" cy="7.500" r="4" fill="#fff" stroke="#222" stroke-width="1.500"/><path d="M7.500 1v5M7.500 9v5M1 7.500h5M9 7.500h5" stroke="#222" stroke-width="1.300"/>
      <text class="tick" x="16" y="8">0</text></svg>`;
  }

  private sideRuler() {
    const out = [];
    for (let k = -39; k <= 86; k++) {
      const y = Math.round(517.5 - (k * STEP) / 10) + 0.5;
      if (y < 0) continue;
      const w = k % 10 === 0 ? 14 : k % 5 === 0 ? 5 : 2;
      out.push(svg`<path d="M${14 - w} ${y}h${w}" stroke="#333"/>`);
      if (k % 10 === 0) out.push(svg`<text class="tick" transform="translate(9 ${y - 3}) rotate(-90)">${Math.abs(k * 2)}</text>`);
    }
    return html`<div class="side"><svg aria-hidden="true">${out}<text class="tick" transform="translate(9 753) rotate(-90)">80</text></svg></div>`;
  }

  private canvas() {
    const at: [number, number][] = [[568, 210], [568, 359], [716, 359], [568, 508]];
    return html`<div class="canvas"><svg role="img" aria-label="半円">
      <path d="M568 210a149 149 0 0 1 0 298" fill="none" stroke="#f6cf98" stroke-width="3.500"/>
      <path d="M568 210a149 149 0 0 1 0 298" fill="none" stroke="#a8672a" stroke-width="1.300"/>
      ${at.map(([x, y]) => svg`<rect x=${x - 4.5} y=${y - 4.5} width="8" height="8" fill="#5f9ff0" stroke="#1f2f45"/>`)}
    </svg></div>`;
  }

  private leftSide() {
    return html`<aside class="left">
      ${this.head("基本", false)}
      <div class="toolbox"><div class="tools">${tools.map((t) => this.tool(t))}</div></div>
      ${this.head("属性", true)}
      <div class="attrs">
        ${["面の属性", "線の属性"].map((name, i) => html`
          <div class="group"><span>${name}</span><hr /></div>
          <div class="color"><select aria-label=${name}><option>カラー</option></select><span class="swatch"></span>${caret}</div>
          <div class=${classMap({ box: true, black: i === 1 })}></div>
          <div class=${classMap({ opacity: true, "last-field": i === 0 })}><output>100%</output><button title="不透明度">${icon(3, 14, svg`<path d="M0 1h2v2H0zM0 6h2v2H0zM0 11h2v2H0z" fill="#222"/>`)}</button></div>`)}
        <div class="box weight"><hr />0.05${caret}</div>
        <div class="box ends">${icon(107, 18, svg`<path d="M2 12h37M63 12h36" stroke="#111" stroke-width="3"/><path d="M42 0h19v18H42z" fill="#e8e8e8"/><path d="M41.500 0v18M61.500 0v18" stroke="#888" stroke-width="1.500"/><path d="M48 9V6c0-5 8-5 8 0 0 4-4 4-4 7v4" fill="none" stroke="#777" stroke-width="3"/><path d="M48 9V6c0-5 8-5 8 0 0 4-4 4-4 7v4" fill="none" stroke="#ddd" stroke-width="1.200"/><path d="M46 5l12 13" stroke="#d3232b" stroke-width="2.500"/>`)}</div>
        <button class="more" title="その他">${caret}</button>
      </div>
      ${this.head("ツールセット", false)}
      <div class="list">
        <ul>${toolset.map(([name, g, small]) => html`<li><button class=${classMap({ small: !!small })}>${icon(19, 18, g)}${name}</button></li>`)}</ul>
        <div class="scroll">${icon(8, 5, svg`<path d="M0 5l4-4 4 4" fill="none" stroke="#444" stroke-width="1.400"/>`)}<div class="thumb"></div>${icon(8, 5, svg`<path d="M0 0l4 4 4-4" fill="none" stroke="#444" stroke-width="1.400"/>`)}</div>
      </div>
      <div class="sets">
        <button title="基本図形">${icon(24, 18, svg`<circle cx="14" cy="7" r="6" fill="#e0454b" stroke="#8c2930"/><path d="M1 10l6-3 6 3v6l-6 2-6-2z" fill="#5f93e6" stroke="#2f5795"/><path d="M17 6l6 10c-2 2-9 2-11 0z" fill="#54b45c" stroke="#2b6e33"/>`)}</button>
        <button title="照明">${icon(22, 20, svg`<path d="M6 14l4 4-3 2-4-3z" fill="#999" stroke="#444"/><path d="M6 14c1-3-1-5 1-9 3-5 11-5 13 0 2 5-1 9-5 9-2 1-3 2-5 4z" fill="#fde94a" stroke="#8a741d"/><path d="M9 7c1-3 4-4 6-4" stroke="#fff" stroke-width="1.500" fill="none"/>`)}</button>
        <button class="cur" title="寸法/注釈">${icon(24, 18, svg`<path d="M1 16L15 1h4L6 17z" fill="#ececec" stroke="#555"/><path d="M10 14L19 3l3 2-8 11-4 1z" fill="#4d66b5" stroke="#2b3561"/><path d="M19 3l1-2 3 2-1 2z" fill="#d9535b"/>`)}</button>
        <button title="建築">${icon(26, 18, svg`<path d="M1 4l15 5v8L13 16v-4L2 7z" fill="#8c8c8a" stroke="#333"/><path d="M1 4l9-3 15 4-9 4z" fill="#dededc" stroke="#333"/><path d="M25 5v2l-4 3v4l3 1-7 3v-8z" fill="#bcbcba" stroke="#333"/>`)}</button>
      </div>
    </aside>`;
  }

  private document() {
    const teapot = svg`<path d="M3 7h12c1 6-3 8-6 8s-7-2-6-8zM15 8l3-3M3 8C0 5 0 11 4 12M6 6c1-3 6-3 7 0z" fill="#bcbcf0" stroke="#4a4f7d" stroke-width="1.200"/>`;
    const s4 = html`<span class="s4"></span>`;
    const s7 = html`<span class="s7"></span>`;
    const s9 = html`<span class="s9"></span>`;
    const rule = html`<span class="rule"></span>`;
    return html`<section class="doc">
      <div class="tabs"><div class="tab">${icon(23, 20, svg`<path d="M3 20L20.500 .5H23V20z" fill="#fefefe"/><path d="M3 20L20.500 .5H23" fill="none" stroke="#bbb"/>`)}<span>名称未設定 1</span></div>${caret}</div>
      <div class="bar">
        <button title="戻る">${icon(16, 16, svg`<path d="M0 8l7-7v4h8v6H7v4z" fill="#a5a5a5" stroke="#444"/>`)}</button>
        <button title="進む">${icon(20, 16, svg`<path d="M20 8l-7-7v4H6v6h7v4z" fill="#ebebeb" stroke="#ccc"/>`)}</button>
        ${rule}
        <button title="クラスとレイヤ">${icon(18, 16, svg`<path d="M3 10l4-1 8-6M7 9l8-1M7 9l5 4" fill="none" stroke="#4c6190" stroke-width="1.500"/><g fill="#8ea7dc" stroke="#3f5483" stroke-width=".9"><circle cx="2.500" cy="9.500" r="2"/><circle cx="7" cy="8" r="2"/><circle cx="11" cy="5" r="2"/><circle cx="15.500" cy="2.500" r="2"/><circle cx="15.500" cy="8" r="2"/><circle cx="8" cy="13.500" r="2"/><circle cx="13.500" cy="13.500" r="2"/></g>`)}</button>
        <span class="hidden-fields"></span>
        ${this.pick("", "レイヤ", 80, false, false)}
        ${rule}
        <button title="上へ">${icon(19, 19, svg`<path d="M.5.5h18v18H.5z" fill="#a545a6" stroke="#7b2d80"/><path d="M3 3h5v5H3zM11 3h5v5h-5z" fill="#efaeea"/><path d="M2 17c1-8 4-8 7.500-8s7 0 7.500 8l-4 1v-4H6v4z" fill="#dedfff" stroke="#666bb5"/>`)}</button>
        ${s4}
        <button title="下へ">${icon(20, 19, svg`<path d="M.5.5h19v14H.5z" fill="#a545a6" stroke="#7b2d80"/><path d="M3 2h6v5H3zM11 2h6v5h-6z" fill="#efaeea"/><path d="M2 10h3l2-1h6l2 1h3c0 4-4 5-8 9-4-4-8-5-8-9z" fill="#dedfff" stroke="#666bb5"/>`)}</button>
        ${s4}
        ${this.pick("レイヤプレーン", "基準面", 123)}
        ${rule}
        <div class="split"><button title="表示">${icon(18, 14, svg`<path d="M1 0h15v14H1z" fill="#dcdce4" stroke="#777"/><path d="M2 7c4-6 9-6 13 0-4 6-9 6-13 0z" fill="#fff" stroke="#456"/><circle cx="8.500" cy="7" r="3" fill="#3f5d8d"/>`)}</button><button title="表示の設定">${smallCaret}</button></div>
        ${rule}
        ${s7}
        <button title="用紙全体">${icon(16, 16, svg`<path d="M1 1h11v13H1z" fill="#fff" stroke="#444"/><g transform="translate(2 1) scale(.85)">${lens}</g>`)}</button>
        ${s7}
        <button title="図形全体">${icon(18, 16, svg`<path d="M1 9h6v6H1zM11 1h6v5h-6z" fill="#bfc6f2" stroke="#7b84bb"/><g transform="translate(3 0) scale(.85)">${lens}</g>`)}</button>
        ${s7}
        <button title="拡大率">${icon(16, 16, svg`<g transform="scale(.9)">${lens}</g>`)}</button>
        ${s7}
        ${this.pick("78%", "表示倍率", 82, false, false)}
        ${rule}
        <button title="ビュー">${icon(17, 18, svg`<path d="M1 2l16-2-1 18-15-1z" fill="#a545a6" stroke="#7b2d80"/><path d="M3 4l5-1v5H3zM10 3l5-1v6h-5zM3 10h5v5H3zM10 10h5v6h-5z" fill="#f2b4ee"/>`)}</button>
        ${s4}
        <button class="on-blue" title="統合ビュー">${icon(20, 18, svg`<path d="M0 12l10 6 10-6" fill="none" stroke="#2c8ea6" stroke-width="1.300"/><path d="M10 3l10 6-10 6L0 9z" fill="#3f9fb6" stroke="#155f7b" stroke-width="1.300"/><g fill="#9ee2ee"><ellipse cx="10" cy="6" rx="2" ry="1.200"/><ellipse cx="5.500" cy="9" rx="2" ry="1.200"/><ellipse cx="14.500" cy="9" rx="2" ry="1.200"/><ellipse cx="10" cy="12" rx="2" ry="1.200"/></g>`)}</button>
        ${s9}
        ${this.pick("2D/平面", "ビュー", 123)}
        ${rule}
        <button title="レンダリング">${icon(16, 15, svg`<path d="M.5.5h15v14H.5z" fill="#c9c9c7" stroke="#555"/><path d="M3 4h3M8 4h5M8 7h5M3 7h3M8 11h5" stroke="#777" stroke-width="1.500"/>`)}</button>
        ${s9}
        ${this.pick("2D平面", "投影", 124)}
        ${rule}
        <div class="split"><button title="レンダー">${icon(20, 16, teapot)}</button><button title="レンダー設定">${caret}</button></div>
        <span class="grow"></span>
        <button class="pill" title="続き">${icon(4, 6, svg`<path d="M0 0l4 3-4 3z" fill="#fff"/>`)}</button>
      </div>
      <div class="bar modes">
        ${s4}
        <button title="変形不可">${icon(25, 18, svg`<path d="M2 15L15 2" stroke="#444" stroke-width="1.500"/><path d="M0 13h4v4H0zM7 7h4v4H7zM12 1h4v4h-4z" fill="#fff" stroke="#444"/><circle cx="17" cy="10" r="6" fill="#fff" stroke="#cf222b" stroke-width="2.600"/><path d="M13 6l8 8" stroke="#cf222b" stroke-width="2.600"/>`)}</button>
        ${s9}
        <button title="単一図形変形">${icon(18, 18, svg`<path d="M2 15L15 2" stroke="#444" stroke-width="1.500"/><path d="M1 12h4v4H1zM7 7h4v4H7zM12 2h4v4h-4z" fill="#fff" stroke="#444"/>`)}</button>
        <span class="hint">セレクション ツール: 矩形 モード</span>
        <span class="grow"></span>
        <button title="設定">${icon(27, 20, svg`<path d="M17 12l7 6" stroke="#59637c" stroke-width="4" stroke-linecap="round"/><path d="M17 12l7 6" stroke="#b9c0ea" stroke-width="2" stroke-linecap="round"/><circle cx="14" cy="8" r="5.500" fill="#dfe1f6" stroke="#59637c" stroke-width="1.500"/><path d="M2 17L25 1" stroke="#4b4f5e" stroke-width="2.200"/>`)}</button>
        ${s7}
        <div class="split"><button title="環境設定">${icon(20, 20, svg`<circle cx="10" cy="10" r="8" fill="none" stroke="#59637c" stroke-width="3" stroke-dasharray="3.600 2.680"/><circle cx="10" cy="10" r="7" fill="#c3caee" stroke="#59637c"/><circle cx="10" cy="10" r="2.500" fill="#fff" stroke="#59637c"/>`)}</button><button title="環境設定の一覧">${caret}</button></div>
        <div class="split"><button title="表示切替">${icon(20, 20, svg`<path d="M3 8c2-3 10-4 13-1l3-2-2 5c0 6-4 8-8 8s-5-2-6-4c-3-1-3-5 0-6z" fill="#a9aed8" stroke="#444a68"/><path d="M1 17L19 3" stroke="#555b78" stroke-width="2.500"/>`)}</button><button title="表示切替の一覧">${caret}</button></div>
        <div class="split"><button title="図形表示">${icon(22, 20, svg`<path d="M1 4l5-3 6 3v7l-6 3-5-3z" fill="#c6c9ee" stroke="#59637c"/><path d="M9 9h11v10H9z" fill="#b9bdea" stroke="#59637c"/><path d="M3 19L18 2" stroke="#4b4f5e" stroke-width="2"/>`)}</button><button title="図形表示の一覧">${caret}</button></div>
        <span class="s16"></span>
        <button class="pill" title="続き">${icon(4, 6, svg`<path d="M0 0l4 3-4 3z" fill="#fff"/>`)}</button>
      </div>
      <div class="sheet">${this.topRuler()}${this.sideRuler()}${this.canvas()}</div>
    </section>`;
  }

  private rightSide() {
    return html`<aside class="right">
      ${this.head("オブジェクト情報 - 形状", true)}
      <div class="views"><button class="cur">形状</button><button>データ</button><button>レンダー</button></div>
      <div class="info">2 図形 ${icon(64, 10, svg`<circle cx="5" cy="5" r="3.500"/><circle cx="15" cy="5" r="3.500"/><circle cx="25" cy="5" r="3.500"/><path d="M42 0v10l-6-5z"/><circle cx="49" cy="5" r="5"/><path d="M58 0v10l5-5z" fill="#888"/>`)}</div>
      <div class="form">
        ${[["クラス:", "一般"], ["レイヤ:", "レイヤ-1"], ["基準面:", "レイヤ"]].map(([l, v]) => html`<label class="row">${l}${this.pick(v, l, null, false, false)}</label>`)}
      </div>
      <label class="name">名前: <input value="*選択されている*" /></label>
      ${this.head("リソースマネージャ", true, false)}
      <div class="find">${smallCaret}<div class="field"><input type="search" aria-label="検索" placeholder="検索" />${icon(16, 16, svg`<circle cx="9.500" cy="6" r="5" fill="none" stroke="#4a6fa5" stroke-width="1.500"/><path d="M6 10l-5 5" stroke="#4a6fa5" stroke-width="2.500"/>`)}</div></div>
      <div class="assets">
        <div class="pane">
          <div class="crumb">${icon(15, 16, svg`<path d="M0 0h12l3 3v13H0z" fill="#444"/><circle cx="7.500" cy="8" r="5" fill="none" stroke="#ddd"/><path d="M5 6l2.500 5L10 6" fill="none" stroke="#ddd"/>`)}«<span>名称未設定 1</span></div>
          <table><thead><tr><th><div class="th">名前${icon(7, 4, svg`<path d="M0 4l3.500-3.500L7 4" fill="none" stroke="#888"/>`)}</div></th><th>タイプ</th></tr></thead></table>
          <p class="empty">表示可能な項目はありません</p>
          <div class="count">0 項目</div>
        </div>
        <div class="preview">
          <p class="res">リソース...</p><div class="strip"></div><h3>データ</h3>
          <p class="note">表示<br />可能<br />な項<br />目は<br />ありま</p>
        </div>
      </div>
      <div class="foot"><button>新規リソース...</button><button>新規フォルダ...</button></div>
    </aside>`;
  }

  render() {
    return html`
      <header class="title">${icon(16, 14, svg`<circle cx="8" cy="7" r="7" fill="#222"/><path d="M4.500 4L8 11l3.500-7" fill="none" stroke="#fff" stroke-width="1.800"/>`)}
        <h1>Vectorworks Fundamentals 2022 - [名称未設定 1]</h1>
        <div class="winbtns">
          <button title="最小化">${icon(10, 10, svg`<path d="M0 5.500h10" stroke="#333"/>`)}</button>
          <button title="元に戻す">${icon(11, 11, svg`<path d="M.5 2.500h8v8h-8zM3 2.500V.5h7.500V8H9" fill="none" stroke="#333"/>`)}</button>
          <button title="閉じる">${icon(10, 10, svg`<path d="M0 0l10 10M10 0L0 10" stroke="#333" stroke-width="1.200"/>`)}</button>
        </div>
      </header>
      <nav class="menubar">
        <div class="logo">${icon(14, 16, svg`<path d="M0 0h10l4 4v12H0z" fill="#222"/><circle cx="7" cy="8" r="5" fill="none" stroke="#aaa"/><path d="M4.500 6L7 11l2.500-5" fill="none" stroke="#eee" stroke-width="1.400"/>`)}</div>
        <ul class="menus">${menus.map(([name, w]) => html`<li style="width:${w}px">
          <button class=${classMap({ open: name === "モデル" })}>${name}</button>
          ${name === "モデル" ? html`<ul class="drop">${modelMenu.map((e) => this.entry(e))}</ul><span class="badge">3</span>` : nothing}</li>`)}</ul>
        <div class="account">
          <button class="search" title="検索">${icon(12, 12, svg`<circle cx="4.500" cy="4.500" r="3.500" fill="none" stroke="#888" stroke-width="1.200"/><path d="M7 7l4 4" stroke="#666" stroke-width="2"/>`)}</button>
          <button class="bell" title="通知">${icon(15, 12, svg`<path d="M0 11c2-2 1-7 5-8 4 1 4 5 6 8z" fill="#ccc" stroke="#777"/><circle cx="9" cy="4" r="4.500" fill="#e8171f"/><path d="M9 2v4" stroke="#fff"/>`)}</button>
          <button class="signin">${icon(10, 12, svg`<circle cx="5" cy="3" r="2.500" fill="#888" stroke="#444"/><path d="M0 6h10v5H0z" fill="#888" stroke="#444"/>`)}サインイン</button>
        </div>
        <div class="mdi">${icon(7, 10, svg`<path d="M0 9h6" stroke="#222" stroke-width="2"/>`)}${icon(9, 10, svg`<path d="M1 5h5v4H1zM3 4V1h5v5H6" fill="none" stroke="#222" stroke-width="1.400"/>`)}${icon(8, 8, svg`<path d="M1 0l6 6M7 0L1 6" stroke="#222" stroke-width="1.500"/>`)}</div>
      </nav>
      <main>${this.leftSide()}${this.document()}${this.rightSide()}</main>
      <footer class="status">
        <span>回転体...</span><output>X: -106.5</output><output>Y: 178.5</output>
        <div class="snaps">
          ${snaps.map(([t, c, g]) => html`<button class=${c} title=${t}>${icon(20, 20, g)}</button>`)}
          <button class="gap" title="一時停止">${icon(20, 20, svg`<path d="M6 5h3v14H6zM12 5h3v14h-3z" fill="#111"/>`)}</button>
          <button title="設定">${icon(20, 20, svg`<circle cx="12" cy="11" r="5" fill="none" stroke="#111" stroke-width="4" stroke-dasharray="3 1"/>`)}</button>
        </div>
      </footer>`;
  }
}
